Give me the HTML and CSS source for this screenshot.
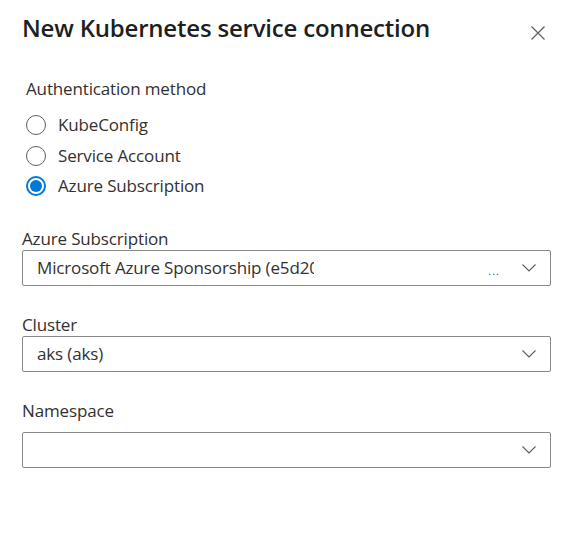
FILE: index.html
```html
<!DOCTYPE html>
<html>
<head>
<meta charset="utf-8">
<link rel="stylesheet" href="styles.css">
</head>
<body>
<div class="panel">
  <div class="header">
    <h1 class="title">New Kubernetes service connection</h1>
    <button class="close" aria-label="Close">
      <svg width="14" height="14" viewBox="0 0 14 14"><path d="M0.5 0.5 L13.5 13.5 M13.5 0.5 L0.5 13.5" stroke="#605e5c" stroke-width="1.2" fill="none"/></svg>
    </button>
  </div>
  <div class="auth">
    <div class="auth-label">Authentication method</div>
    <div class="radio-row"><span class="radio"></span><span class="radio-text">KubeConfig</span></div>
    <div class="radio-row"><span class="radio"></span><span class="radio-text">Service Account</span></div>
    <div class="radio-row"><span class="radio checked"></span><span class="radio-text">Azure Subscription</span></div>
  </div>
  <div class="field">
    <div class="field-label">Azure Subscription</div>
    <div class="select">
      <span class="value clipped">Microsoft Azure Sponsorship (e5d2<span class="cut">0</span></span>
      <span class="ellipsis">...</span>
      <svg class="chev" width="14" height="8" viewBox="0 0 14 8"><path d="M0.5 0.5 L7 7 L13.5 0.5" stroke="#605e5c" stroke-width="1.1" fill="none"/></svg>
    </div>
  </div>
  <div class="field">
    <div class="field-label">Cluster</div>
    <div class="select">
      <span class="value">aks (aks)</span>
      <svg class="chev" width="14" height="8" viewBox="0 0 14 8"><path d="M0.5 0.5 L7 7 L13.5 0.5" stroke="#605e5c" stroke-width="1.1" fill="none"/></svg>
    </div>
  </div>
  <div class="field">
    <div class="field-label ns">Namespace</div>
    <div class="select">
      <span class="value"></span>
      <svg class="chev" width="14" height="8" viewBox="0 0 14 8"><path d="M0.5 0.5 L7 7 L13.5 0.5" stroke="#605e5c" stroke-width="1.1" fill="none"/></svg>
    </div>
  </div>
</div>
</body>
</html>
```
FILE: styles.css
```css
* { box-sizing: border-box; }
html, body { margin: 0; padding: 0; background: #ffffff; }
body {
  font-family: "Open Sans", "Noto Sans", "Liberation Sans", sans-serif;
  color: #323130;
  width: 573px;
  height: 553px;
}
.panel {
  padding: 12px 22px 0 22px;
}
.header {
  display: flex;
  align-items: flex-start;
  justify-content: space-between;
  height: 66px;
}
.title {
  margin: 0;
  font-size: 24px;
  font-weight: 600;
  color: #201f1e;
  line-height: 32px;
  letter-spacing: -0.2px;
}
.close {
  border: none;
  background: none;
  padding: 0;
  margin: 14px 6px 0 0;
  width: 14px;
  height: 14px;
  display: flex;
}
.auth {
  padding-left: 4px;
  margin-bottom: 32px;
}
.auth-label {
  font-size: 17px;
  line-height: 22px;
  margin-bottom: 15px;
  letter-spacing: -0.15px;
}
.radio-row {
  display: flex;
  align-items: center;
  height: 20px;
  margin-bottom: 10.5px;
}
.radio-row:last-child {
  margin-bottom: 0;
}
.radio {
  width: 20px;
  height: 20px;
  border: 1px solid #605e5c;
  border-radius: 50%;
  margin-right: 12px;
  flex: none;
  position: relative;
}
.radio.checked {
  border: 2px solid #0078d4;
}
.radio.checked::after {
  content: "";
  position: absolute;
  left: 2px;
  top: 2px;
  width: 12px;
  height: 12px;
  border-radius: 50%;
  background: #0078d4;
}
.radio-text {
  font-size: 17px;
  line-height: 20px;
  letter-spacing: -0.15px;
}
.field {
  margin-bottom: 28px;
}
.field-label {
  font-size: 17px;
  line-height: 22px;
  letter-spacing: -0.15px;
}
.field-label.ns {
  margin-bottom: 10px;
}
.select {
  width: 529px;
  height: 36px;
  border: 1px solid #8a8886;
  border-radius: 2px;
  display: flex;
  align-items: center;
  padding: 0 14px 0 14px;
  position: relative;
}
.value {
  font-size: 17px;
  letter-spacing: -0.15px;
  white-space: nowrap;
  flex: 1;
  line-height: 22px;
}
.value.clipped {
  flex: none;
}
.cut {
  display: inline-block;
  width: 5px;
  overflow: hidden;
  vertical-align: top;
}
.ellipsis {
  margin-left: auto;
  margin-right: 22px;
  font-size: 11px;
  color: #605e5c;
  letter-spacing: 1px;
  padding-top: 4px;
}
.chev {
  flex: none;
}
```
